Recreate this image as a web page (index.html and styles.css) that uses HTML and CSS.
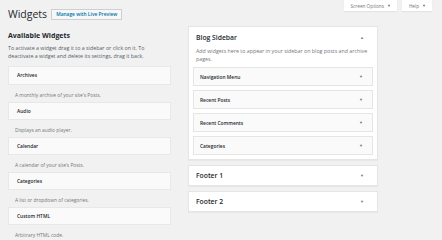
FILE: index.html
```html
<!DOCTYPE html>
<html lang="en">
<head>
    <meta charset="utf-8">
    <link rel="stylesheet" href="styles.css">
</head>
<body>
<div class="screen-meta">
    <span class="meta-btn">Screen Options <i class="caret">&#9660;</i></span>
    <span class="meta-btn">Help <i class="caret">&#9660;</i></span>
</div>
<div class="wrap">
    <div class="page-title">
        <h1>Widgets</h1>
        <span class="title-btn">Manage with Live Preview</span>
    </div>
    <div class="columns">
        <div class="available">
            <h2>Available Widgets</h2>
            <p class="intro">To activate a widget drag it to a sidebar or click on it. To deactivate a widget and delete its settings, drag it back.</p>
            <ul class="widget-list">
                <li>
                    <div class="widget-top">Archives</div>
                    <p class="widget-desc">A monthly archive of your site’s Posts.</p>
                </li>
                <li>
                    <div class="widget-top">Audio</div>
                    <p class="widget-desc">Displays an audio player.</p>
                </li>
                <li>
                    <div class="widget-top">Calendar</div>
                    <p class="widget-desc">A calendar of your site’s Posts.</p>
                </li>
                <li>
                    <div class="widget-top">Categories</div>
                    <p class="widget-desc">A list or dropdown of categories.</p>
                </li>
                <li>
                    <div class="widget-top">Custom HTML</div>
                    <p class="widget-desc">Arbitrary HTML code.</p>
                </li>
            </ul>
        </div>
        <div class="sidebars">
            <div class="sidebar open">
                <div class="sidebar-head">
                    <h3>Blog Sidebar</h3>
                    <i class="caret">&#9650;</i>
                </div>
                <p class="sidebar-desc">Add widgets here to appear in your sidebar on blog posts and archive pages.</p>
                <div class="sidebar-widget"><span>Navigation Menu</span><i class="caret">&#9660;</i></div>
                <div class="sidebar-widget"><span>Recent Posts</span><i class="caret">&#9660;</i></div>
                <div class="sidebar-widget"><span>Recent Comments</span><i class="caret">&#9660;</i></div>
                <div class="sidebar-widget"><span>Categories</span><i class="caret">&#9660;</i></div>
            </div>
            <div class="sidebar">
                <div class="sidebar-head">
                    <h3>Footer 1</h3>
                    <i class="caret">&#9660;</i>
                </div>
            </div>
            <div class="sidebar">
                <div class="sidebar-head">
                    <h3>Footer 2</h3>
                    <i class="caret">&#9660;</i>
                </div>
            </div>
        </div>
    </div>
</div>
</body>
</html>
```

FILE: styles.css
```css
* {
    margin: 0;
    padding: 0;
    box-sizing: border-box;
}

ul {
    list-style: none;
}

body {
    background-color: #f1f1f1;
    color: #23282d;
    font-family: "Open Sans", "Noto Sans", sans-serif;
}

i {
    font-style: normal;
}

.caret {
    font-size: 4px;
    color: #72777c;
}

.screen-meta {
    float: right;
    display: flex;
    gap: 5px;
    margin-right: 10px;
}

.meta-btn {
    display: flex;
    align-items: center;
    gap: 3px;
    height: 11px;
    padding: 0 6px 0 7px;
    background-color: #fff;
    box-shadow: 0 1px 1px rgba(0, 0, 0, .05);
    font-size: 4.7px;
    color: #72777c;
}

.wrap {
    padding: 8px 0 0 8px;
}

.page-title {
    display: flex;
    align-items: center;
    gap: 4px;
    height: 13px;
}

h1 {
    font-size: 10.5px;
    font-weight: 400;
    line-height: 13px;
}

.title-btn {
    height: 11px;
    line-height: 9px;
    padding: 0 4px;
    border: 1px solid #ccd0d4;
    background-color: #f7f7f7;
    color: #0073aa;
    font-size: 4.9px;
    font-weight: 600;
}

.columns {
    display: flex;
    gap: 17px;
    margin-top: 5px;
}

.available {
    width: 163px;
}

h2 {
    margin-top: 5px;
    font-size: 7px;
    font-weight: 700;
    line-height: 10px;
}

.intro {
    margin-top: 3px;
    font-size: 5.3px;
    line-height: 8px;
    color: #555d66;
}

.widget-list {
    margin-top: 6px;
}

.widget-top {
    height: 19px;
    padding-left: 8px;
    line-height: 17px;
    background-color: #fafafa;
    border: 1px solid #e8e8e8;
    font-size: 4.9px;
    font-weight: 600;
}

.widget-desc {
    height: 17px;
    padding-left: 7px;
    font-size: 4.9px;
    line-height: 20px;
    color: #72777c;
}

.widget-list li:nth-child(n+2) .widget-top {
    height: 18px;
}

.sidebars {
    width: 190px;
    display: flex;
    flex-direction: column;
    gap: 5px;
}

.sidebar {
    background-color: #fff;
    border: 1px solid #e5e5e5;
    box-shadow: 0 1px 1px rgba(0, 0, 0, .04);
    padding: 0 4px;
}

.sidebar.open {
    padding-bottom: 4px;
}

.sidebar-head {
    display: flex;
    justify-content: space-between;
    align-items: center;
    height: 19px;
    padding: 0 9px 0 3px;
}

.sidebar.open .sidebar-head {
    height: 20px;
}

h3 {
    font-size: 6.8px;
    font-weight: 600;
}

.sidebar-desc {
    margin: 0 3px 2px;
    font-size: 5.3px;
    line-height: 8px;
    color: #72777c;
}

.sidebar-widget {
    display: flex;
    justify-content: space-between;
    align-items: center;
    height: 19px;
    margin-top: 4px;
    padding: 0 9px 0 6px;
    background-color: #fafafa;
    border: 1px solid #e5e5e5;
    font-size: 4.9px;
    font-weight: 600;
}
```
